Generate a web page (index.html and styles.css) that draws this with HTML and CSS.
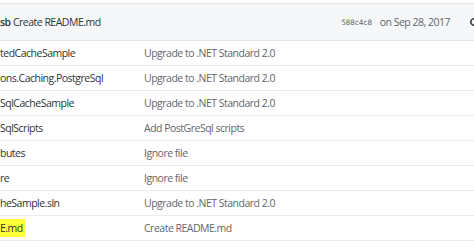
FILE: index.html
```html
<!DOCTYPE html>
<html>
<head>
  <meta charset="UTF-8">
  <link rel="stylesheet" href="styles.css">
</head>
<body>
  <div class="files">
    <div class="commit-bar">
      <span class="commit-title"><b>sb</b> Create README.md</span>
      <span class="commit-meta">
        <span class="sha">588c4c8</span>
        <span>on Sep 28, 2017</span>
        <svg class="history" viewBox="0 0 8 8"><circle cx="4" cy="4" r="3.2" fill="none" stroke="currentColor" stroke-width="1.6"/></svg>
      </span>
    </div>
    <div class="row"><span class="name">tedCacheSample</span><span class="msg">Upgrade to .NET Standard 2.0</span></div>
    <div class="row"><span class="name">ons.Caching.PostgreSql</span><span class="msg">Upgrade to .NET Standard 2.0</span></div>
    <div class="row"><span class="name">SqlCacheSample</span><span class="msg">Upgrade to .NET Standard 2.0</span></div>
    <div class="row"><span class="name">SqlScripts</span><span class="msg">Add PostGreSql scripts</span></div>
    <div class="row"><span class="name">butes</span><span class="msg">Ignore file</span></div>
    <div class="row"><span class="name">re</span><span class="msg">Ignore file</span></div>
    <div class="row"><span class="name">heSample.sln</span><span class="msg">Upgrade to .NET Standard 2.0</span></div>
    <div class="row"><span class="name"><mark>E.md</mark></span><span class="msg">Create README.md</span></div>
  </div>
</body>
</html>
```

FILE: styles.css
```css
body {
  margin: 0;
  background: #ffffff;
  font-family: 'Open Sans', 'Noto Sans', sans-serif;
  font-size: 10.5px;
  letter-spacing: -0.5px;
  color: #2f3337;
  -webkit-font-smoothing: antialiased;
}

.files {
  margin-top: 3px;
  border-top: 1px solid #e3e6e9;
}

.commit-bar {
  height: 36px;
  display: flex;
  align-items: center;
  justify-content: space-between;
  background: #f5f7f9;
  border-bottom: 1px solid #e3e6e9;
}

.commit-title b {
  font-weight: 600;
}

.commit-meta {
  display: flex;
  align-items: center;
  gap: 8px;
  color: #5f666d;
}

.sha {
  font-family: 'DejaVu Sans Mono', monospace;
  font-size: 7.5px;
  letter-spacing: -0.2px;
}

.history {
  width: 8px;
  height: 8px;
  color: #3a3f44;
  margin-left: 12px;
  margin-right: -4px;
}

.row {
  height: 24px;
  display: flex;
  align-items: center;
  border-bottom: 1px solid #eaedf0;
}

.name {
  width: 144px;
  flex: none;
}

.msg {
  color: #5f666d;
}

mark {
  background: #ffff3a;
  color: #2f3337;
  padding: 2px 2px 2px 0;
}
```
